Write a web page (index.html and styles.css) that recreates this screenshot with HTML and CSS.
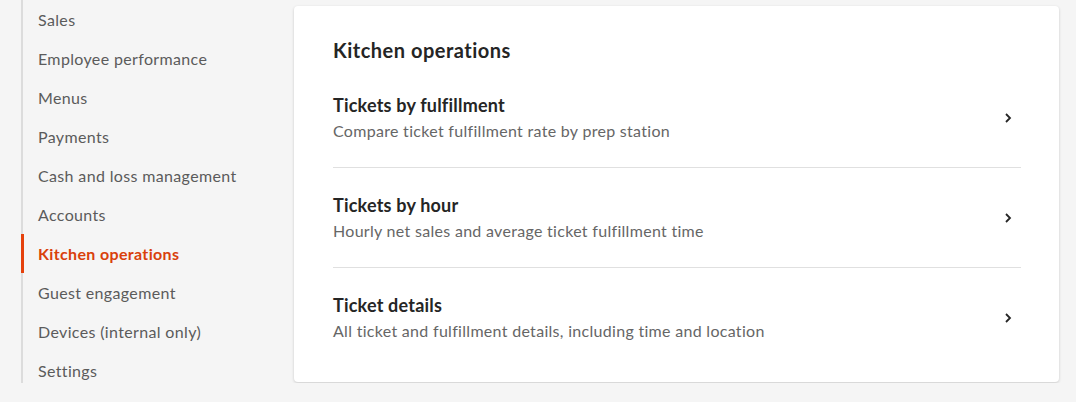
FILE: index.html
```html
<!DOCTYPE html>
<html lang="en">
<head>
    <meta charset="UTF-8">
    <meta name="viewport" content="width=device-width, initial-scale=1.0">
    <title>Kitchen operations</title>
    <link rel="stylesheet" href="styles.css">
</head>
<body>
    <div class="layout">
        <nav class="side-nav">
            <a class="nav-item" href="#">Sales</a>
            <a class="nav-item" href="#">Employee performance</a>
            <a class="nav-item" href="#">Menus</a>
            <a class="nav-item" href="#">Payments</a>
            <a class="nav-item" href="#">Cash and loss management</a>
            <a class="nav-item" href="#">Accounts</a>
            <a class="nav-item active" href="#">Kitchen operations</a>
            <a class="nav-item" href="#">Guest engagement</a>
            <a class="nav-item" href="#">Devices (internal only)</a>
            <a class="nav-item" href="#">Settings</a>
        </nav>

        <main class="card">
            <h2>Kitchen operations</h2>
            <a class="report-row" href="#">
                <div class="report-text">
                    <div class="report-title">Tickets by fulfillment</div>
                    <div class="report-desc">Compare ticket fulfillment rate by prep station</div>
                </div>
                <svg class="chevron" width="16" height="16" viewBox="0 0 16 16"><path d="M6 4l4 4-4 4" fill="none" stroke="#252525" stroke-width="1.8"/></svg>
            </a>
            <a class="report-row" href="#">
                <div class="report-text">
                    <div class="report-title">Tickets by hour</div>
                    <div class="report-desc">Hourly net sales and average ticket fulfillment time</div>
                </div>
                <svg class="chevron" width="16" height="16" viewBox="0 0 16 16"><path d="M6 4l4 4-4 4" fill="none" stroke="#252525" stroke-width="1.8"/></svg>
            </a>
            <a class="report-row" href="#">
                <div class="report-text">
                    <div class="report-title">Ticket details</div>
                    <div class="report-desc">All ticket and fulfillment details, including time and location</div>
                </div>
                <svg class="chevron" width="16" height="16" viewBox="0 0 16 16"><path d="M6 4l4 4-4 4" fill="none" stroke="#252525" stroke-width="1.8"/></svg>
            </a>
        </main>
    </div>
</body>
</html>
```

FILE: styles.css
```css
body {
    font-family: 'Lato', 'Liberation Sans', sans-serif;
    background-color: #f5f5f5;
    margin: 0;
    color: #252525;
}
.layout {
    display: flex;
    align-items: flex-start;
    padding-left: 21px;
}
.side-nav {
    display: flex;
    flex-direction: column;
    width: 251px;
    border-left: 2px solid #dcdcdc;
}
.nav-item {
    display: block;
    height: 39px;
    line-height: 39px;
    padding-left: 15px;
    margin-left: -2px;
    border-left: 2px solid transparent;
    font-size: 16px;
    letter-spacing: 0.35px;
    color: #5b5b5b;
    text-decoration: none;
}
.nav-item:last-child {
    height: 32px;
}
.nav-item.active {
    border-left: 3px solid #e5410c;
    padding-left: 14px;
    color: #d9400b;
    font-weight: bold;
}
.card {
    flex: 1;
    margin: 6px 17px 0 20px;
    background: #fff;
    border-radius: 4px;
    box-shadow: 0 1px 3px rgba(0, 0, 0, 0.18);
    padding: 30px 38px 15px 39px;
}
h2 {
    margin: 0 0 4px;
    font-size: 20px;
    line-height: 28px;
    letter-spacing: 0.5px;
    font-weight: bold;
    color: #252525;
}
.report-row {
    display: flex;
    align-items: center;
    padding: 25px 0 24px;
    border-bottom: 1px solid #e0e0e0;
    text-decoration: none;
    color: inherit;
}
.report-row:last-child {
    border-bottom: none;
}
.report-text {
    flex: 1;
}
.report-title {
    font-size: 18px;
    line-height: 24px;
    letter-spacing: 0.2px;
    font-weight: bold;
    color: #252525;
}
.report-desc {
    margin-top: 2px;
    font-size: 16px;
    line-height: 24px;
    letter-spacing: 0.3px;
    color: #666;
}
.chevron {
    margin-right: 5px;
}
```
